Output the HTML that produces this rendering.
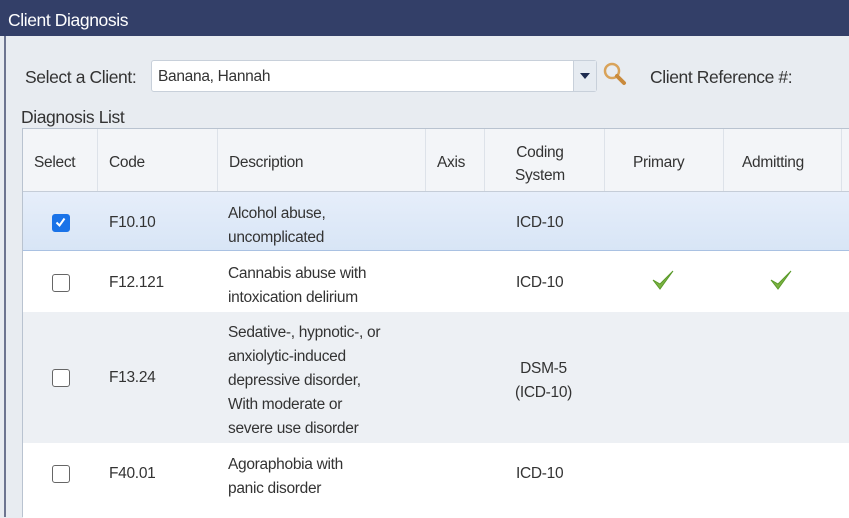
<!DOCTYPE html>
<html><head><style>
*{margin:0;padding:0;box-sizing:border-box}
body{width:849px;height:517px;overflow:hidden;background:#e8ecf1;font-family:"Liberation Sans",sans-serif;font-size:15.5px;color:#333;position:relative}
.title{position:absolute;left:0;top:0;width:849px;height:36px;background:#333f68;color:#fff;font-size:17.5px;padding:10px 0 0 8px;letter-spacing:-0.4px}
.lb{position:absolute;left:4px;top:36px;width:2px;height:481px;background:#6d7590}
.t{position:absolute;white-space:nowrap;letter-spacing:-0.3px}
.lab{font-size:17.5px;letter-spacing:-0.4px}
.input{position:absolute;left:151px;top:60px;width:446px;height:32px;background:#fff;border:1px solid #c8d0da;border-radius:3px}
.dd{position:absolute;right:0;top:0;width:23px;height:30px;background:#e6ebf1;border-left:1px solid #c8d0da}
.grid{position:absolute;left:22px;top:128px;width:827px;height:389px;background:#fff;border-left:1px solid #b9c3d0;border-top:1px solid #b9c3d0}
.hdr{position:absolute;left:0;top:0;width:827px;height:63px;background:#f3f5f8;border-bottom:1px solid #c5cdd8}
.vl{position:absolute;top:0;width:1px;height:62px;background:#dde2e9}
.row{position:absolute;left:0;width:827px}
.cb{position:absolute;left:29px;width:18px;height:18px;border:1.5px solid #666;border-radius:3px;background:#fff}
</style></head><body>
<div class="title">Client Diagnosis</div>
<div class="lb"></div>
<div class="t lab" style="left:25px;top:67px">Select a Client:</div>
<div class="input"><div class="t" style="left:6px;top:7px">Banana, Hannah</div><div class="dd"><div style="position:absolute;left:6px;top:12px;width:0;height:0;border-left:5px solid transparent;border-right:5px solid transparent;border-top:6px solid #1d2b4f"></div></div></div>
<svg style="position:absolute;left:601px;top:60px" width="28" height="28" viewBox="0 0 28 28"><circle cx="11" cy="11" r="7" fill="none" stroke="#d9a35a" stroke-width="2.5"/><line x1="16" y1="16" x2="23" y2="23" stroke="#c98a3c" stroke-width="4" stroke-linecap="round"/></svg>
<div class="t lab" style="left:650px;top:67px">Client Reference #:</div>
<div class="t lab" style="left:21px;top:107px">Diagnosis List</div>
<div class="grid">
<div class="hdr">
<div class="vl" style="left:74px"></div><div class="vl" style="left:194px"></div><div class="vl" style="left:402px"></div><div class="vl" style="left:461px"></div><div class="vl" style="left:581px"></div><div class="vl" style="left:700px"></div><div class="vl" style="left:818px"></div>
<div class="t" style="left:11px;top:25px">Select</div>
<div class="t" style="left:86px;top:25px">Code</div>
<div class="t" style="left:206px;top:25px">Description</div>
<div class="t" style="left:414px;top:25px">Axis</div>
<div class="t" style="left:492px;top:12px;text-align:center;line-height:23px">Coding<br>System</div>
<div class="t" style="left:610px;top:25px">Primary</div>
<div class="t" style="left:719px;top:25px">Admitting</div>
</div>
<div class="row" style="top:63px;height:59px;background:linear-gradient(#e6eefa,#d8e5f6);border-bottom:1px solid #a9c1e2">
<div class="cb" style="top:22px;background:#1a73e8;border-color:#1a73e8"><svg width="15" height="15" viewBox="0 0 15 15" style="position:absolute;left:0;top:0"><path d="M3.5 7.5 L6.5 10.5 L11.5 3.5" fill="none" stroke="#fff" stroke-width="2"/></svg></div>
<div class="t" style="left:86px;top:22px">F10.10</div>
<div class="t" style="left:205px;top:10px;line-height:24px">Alcohol abuse,<br>uncomplicated</div>
<div class="t" style="left:493px;top:22px">ICD-10</div>
</div>
<div class="row" style="top:123px;height:60px;background:#fff">
<div class="cb" style="top:22px"></div>
<div class="t" style="left:86px;top:22px">F12.121</div>
<div class="t" style="left:205px;top:10px;line-height:24px">Cannabis abuse with<br>intoxication delirium</div>
<div class="t" style="left:493px;top:22px">ICD-10</div>
<svg style="position:absolute;left:627px;top:15px" width="26" height="26" viewBox="0 0 26 26"><path d="M3 13 L10 22 L23 4 L10 17 Z" fill="#7cb342" stroke="#5a9a2a" stroke-width="1"/></svg>
<svg style="position:absolute;left:745px;top:15px" width="26" height="26" viewBox="0 0 26 26"><path d="M3 13 L10 22 L23 4 L10 17 Z" fill="#7cb342" stroke="#5a9a2a" stroke-width="1"/></svg>
</div>
<div class="row" style="top:183px;height:131px;background:#edf0f4">
<div class="cb" style="top:57px"></div>
<div class="t" style="left:86px;top:57px">F13.24</div>
<div class="t" style="left:205px;top:9px;line-height:24px">Sedative-, hypnotic-, or<br>anxiolytic-induced<br>depressive disorder,<br>With moderate or<br>severe use disorder</div>
<div class="t" style="left:492px;top:45px;line-height:24px;text-align:center">DSM-5<br>(ICD-10)</div>
</div>
<div class="row" style="top:314px;height:75px;background:#fff">
<div class="cb" style="top:22px"></div>
<div class="t" style="left:86px;top:22px">F40.01</div>
<div class="t" style="left:205px;top:10px;line-height:24px">Agoraphobia with<br>panic disorder</div>
<div class="t" style="left:493px;top:22px">ICD-10</div>
</div>
</div>
</body></html>
